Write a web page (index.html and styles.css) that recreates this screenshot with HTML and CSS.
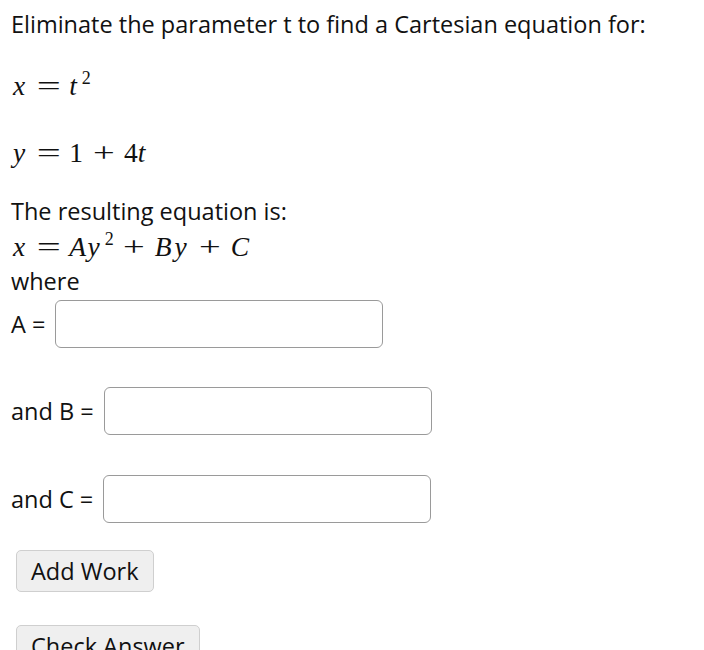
FILE: index.html
```html
<!DOCTYPE html>
<html>
<head>
<meta charset="utf-8">
<link rel="stylesheet" href="styles.css">
</head>
<body>
<div class="page">
  <p class="prompt">Eliminate the parameter t to find a Cartesian equation for:</p>
  <p class="math eq1"><i>x</i><span class="op eq"><span>=</span></span><i>t</i><sup>2</sup></p>
  <p class="math eq2"><i>y</i><span class="op eq"><span>=</span></span>1<span class="op plus"><span>+</span></span>4<i>t</i></p>
  <div class="result">
    <div class="line">The resulting equation is:</div>
    <div class="line math"><i>x</i><span class="op eq"><span>=</span></span><i>A</i><i>y</i><sup>2</sup><span class="op plus"><span>+</span></span><i>B</i><i>y</i><span class="op plus"><span>+</span></span><i>C</i></div>
    <div class="line">where</div>
    <div class="field f-a"><span class="label">A =</span><input class="box" type="text"></div>
    <div class="field f-b"><span class="label">and B =</span><input class="box" type="text"></div>
    <div class="field f-c"><span class="label">and C =</span><input class="box" type="text"></div>
  </div>
  <div class="actions">
    <button class="btn">Add Work</button>
    <button class="btn">Check Answer</button>
  </div>
</div>
</body>
</html>
```

FILE: styles.css
```css
html, body {
  margin: 0;
  padding: 0;
  background: #fff;
}
.page {
  padding: 7px 11px;
  font-family: "Open Sans", "Noto Sans", sans-serif;
  font-size: 23.5px;
  line-height: 35px;
  color: #111;
}
.prompt {
  margin: 0;
}
.math {
  font-family: "Liberation Serif", "DejaVu Serif", serif;
  font-size: 27.5px;
  margin: 0;
  padding-left: 2px;
}
.math i {
  font-style: italic;
  letter-spacing: 3px;
}
.math .op {
  display: inline-block;
  text-align: center;
}
.math .op span {
  display: inline-block;
}
.math .eq {
  width: 41px;
}
.math .eq span {
  transform: scaleX(1.55);
}
.math .plus {
  width: 41px;
}
.math .plus span {
  transform: scaleX(1.4);
}
.math sup {
  font-size: 18px;
  line-height: 0;
  vertical-align: 11px;
  margin-left: 2px;
}
.eq1 {
  margin-top: 26px;
}
.eq2 {
  margin-top: 32px;
}
.result {
  margin-top: 24px;
  display: flex;
  flex-direction: column;
}
.line {
  height: 35px;
}
.field {
  display: flex;
  align-items: center;
  gap: 10px;
}
.f-a {
  margin-top: 1px;
}
.f-b {
  margin-top: 39px;
}
.f-c {
  margin-top: 40px;
}
.box {
  width: 328px;
  height: 48px;
  box-sizing: border-box;
  border: 1.5px solid #9a9a9a;
  border-radius: 6px;
  background: #fff;
  margin: 0;
}
.actions {
  margin-top: 27px;
  display: flex;
  flex-direction: column;
  align-items: flex-start;
  gap: 33px;
  padding-left: 5px;
}
.btn {
  font-family: "Open Sans", "Noto Sans", sans-serif;
  font-size: 23.5px;
  color: #111;
  background: #efefef;
  border: 1px solid #cfcfcf;
  border-radius: 5px;
  height: 42px;
  padding: 0 14px;
  margin: 0;
}
```
